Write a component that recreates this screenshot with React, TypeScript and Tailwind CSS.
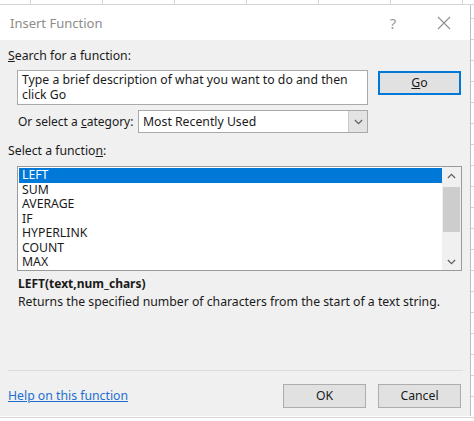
import React from "react";

const FONT = "font-['Segoe_UI','Noto_Sans',sans-serif]";

function Chevron({ up = false, className = "" }: { up?: boolean; className?: string }) {
  return (
    <svg viewBox="0 0 10 6" className={className} fill="none" stroke="currentColor" strokeWidth="1.4">
      {up ? <path d="M1 5.2 L5 1.2 L9 5.2" /> : <path d="M1 0.8 L5 4.8 L9 0.8" />}
    </svg>
  );
}

const rows = Array.from({ length: 20 }, (_, i) => i);
const cols = Array.from({ length: 7 }, (_, i) => i);

export default function App() {
  const fns = ["LEFT", "SUM", "AVERAGE", "IF", "HYPERLINK", "COUNT", "MAX"];
  return (
    <div className={`relative w-[474px] h-[421px] overflow-hidden bg-white ${FONT}`}>
      {/* spreadsheet grid behind the dialog */}
      <div className="flex flex-col">
        <div className="flex h-[5px] border-b border-[#d6d6d6]">
          <div className="w-[31px] shrink-0 border-r border-[#d6d6d6]" />
          {cols.map((c) => (
            <div key={c} className="w-[72px] shrink-0 border-r border-[#d6d6d6]" />
          ))}
        </div>
        <div className="h-[14px] border-b border-[#d6d6d6]" />
        {rows.map((r) => (
          <div key={r} className="h-[21px] border-b border-[#d6d6d6]" />
        ))}
      </div>

      {/* dialog */}
      <div className="absolute left-0 top-[5px] w-[471px] h-[411px] bg-[#f0f0f0] border-r border-[#bdbdbd] flex flex-col text-[12.25px] leading-[16px] text-[#1a1a1a]">
        {/* title bar */}
        <div className="h-[35px] bg-white flex items-center shrink-0">
          <div className="pl-[10px] text-[13px] text-[#8c8c8c]">Insert Function</div>
          <div className="flex-1" />
          <div className="text-[15px] text-[#9a9a9a] w-[16px] text-center mr-[36px]">?</div>
          <svg viewBox="0 0 14 14" className="w-[14px] h-[14px] mr-[19px]" stroke="#8f8f8f" strokeWidth="1.1">
            <path d="M1 1 L13 13 M13 1 L1 13" />
          </svg>
        </div>

        {/* body */}
        <div className="pl-[8px] mt-[8px]">
          <span className="underline">S</span>earch for a function:
        </div>

        <div className="flex items-start mt-[6px] pl-[17px]">
          <div className="w-[351px] h-[35px] bg-white border border-[#a9a9a9] pl-[4px] pt-[1px] leading-[15px]">
            Type a brief description of what you want to do and then click Go
          </div>
          <button className="ml-[10px] mt-[1px] w-[83px] h-[24px] bg-[#e1e1e1] border-2 border-[#0078d7] flex items-center justify-center">
            <span className="underline">G</span>o
          </button>
        </div>

        <div className="flex items-center mt-[5px] pl-[18px]">
          <div className="w-[120px] shrink-0 whitespace-nowrap text-[12px]">
            Or select a <span className="underline">c</span>ategory:
          </div>
          <div className="w-[230px] h-[23px] bg-white border border-[#a9a9a9] flex">
            <div className="flex-1 pl-[4px] flex items-center">Most Recently Used</div>
            <div className="w-[19px] bg-[#e3e3e3] border-l border-[#c8c8c8] flex items-center justify-center text-[#606060]">
              <Chevron className="w-[9px] h-[6px]" />
            </div>
          </div>
        </div>

        <div className="pl-[8px] mt-[10px]">
          Select a functio<span className="underline">n</span>:
        </div>

        <div className="ml-[17px] mt-[7px] w-[445px] h-[105px] bg-white border border-[#9a9a9a] flex">
          <div className="flex-1 pt-[1px] pl-[1px]">
            {fns.map((f, i) => (
              <div
                key={f}
                className={`h-[14.5px] leading-[14.5px] pl-[3px] ${i === 0 ? "bg-[#0078d7] text-white" : ""}`}
              >
                {f}
              </div>
            ))}
          </div>
          <div className="w-[19px] bg-[#f0f0f0] flex flex-col items-center text-[#606060]">
            <div className="h-[17px] flex items-center justify-center">
              <Chevron up className="w-[9px] h-[6px]" />
            </div>
            <div className="mt-[3px] w-[17px] h-[45px] bg-[#cdcdcd]" />
            <div className="flex-1" />
            <div className="h-[17px] flex items-center justify-center">
              <Chevron className="w-[9px] h-[6px]" />
            </div>
          </div>
        </div>

        <div className="pl-[18px] mt-[5px] font-bold text-[12px]">LEFT(text,num_chars)</div>
        <div className="pl-[18px] mt-[2px]">
          Returns the specified number of characters from the start of a text string.
        </div>

        <div className="flex-1" />

        <div className="ml-[8px] w-[455px] border-t border-[#dcdcdc]" />
        <div className="flex items-center mt-[13px] mb-[8px] pl-[8px]">
          <a className="text-[#1c6fd0] underline">Help on this function</a>
          <div className="flex-1" />
          <button className="w-[83px] h-[24px] bg-[#e1e1e1] border border-[#adadad]">OK</button>
          <button className="ml-[12px] mr-[9px] w-[83px] h-[24px] bg-[#e1e1e1] border border-[#adadad]">Cancel</button>
        </div>
      </div>
    </div>
  );
}
